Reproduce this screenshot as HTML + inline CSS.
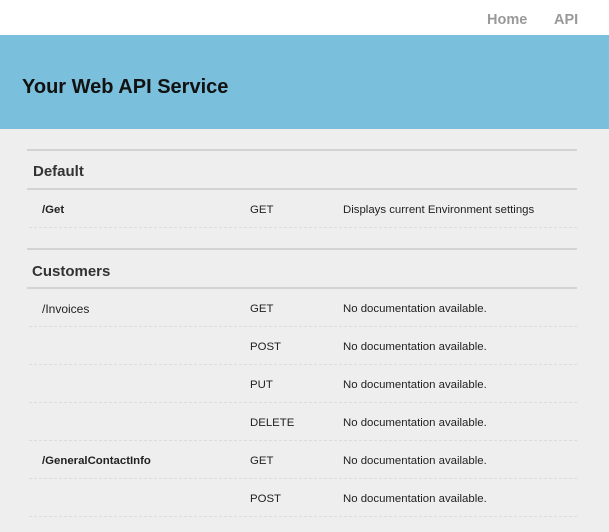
<!DOCTYPE html>
<html><head><meta charset="utf-8"><style>
*{margin:0;padding:0;box-sizing:border-box}
body{width:609px;height:532px;background:#eeeeee;font-family:"Liberation Sans",sans-serif;position:relative;overflow:hidden;color:#222}
.top{position:absolute;left:0;top:0;width:609px;height:35px;background:#fff}
.nav{position:absolute;top:12px;font-size:14.5px;font-weight:bold;color:#999}
.hero{position:absolute;left:0;top:35px;width:609px;height:94px;background:#7abfdb}
.hero h1{position:absolute;left:22px;top:41px;font-size:20px;font-weight:bold;color:#111}
.line{position:absolute;left:27px;width:550px;height:2px;background:#d3d3d3}
.dash{position:absolute;left:29px;width:548px;border-top:1px dashed #dcdcdc}
.h{position:absolute;font-size:15px;font-weight:bold;color:#333}
.t{position:absolute;font-size:11.4px;color:#222;white-space:nowrap}
</style></head><body>
<div class="top"></div>
<div class="nav" style="left:487px">Home</div>
<div class="nav" style="left:554px">API</div>
<div class="hero"><h1>Your Web API Service</h1></div>

<div class="line" style="top:149px"></div>
<div class="h" style="left:33px;top:163px">Default</div>
<div class="line" style="top:188px"></div>
<div class="t" style="left:42px;top:204px;font-weight:bold">/Get</div>
<div class="t" style="left:250px;top:204px">GET</div>
<div class="t" style="left:343px;top:204px">Displays current Environment settings</div>
<div class="dash" style="top:227px"></div>

<div class="line" style="top:248px"></div>
<div class="h" style="left:32px;top:263px">Customers</div>
<div class="line" style="top:287px"></div>

<div class="t" style="left:42px;top:302px;font-size:12px">/Invoices</div>
<div class="t" style="left:250px;top:303px">GET</div>
<div class="t" style="left:343px;top:303px">No documentation available.</div>
<div class="dash" style="top:326px"></div>
<div class="t" style="left:250px;top:341px">POST</div>
<div class="t" style="left:343px;top:341px">No documentation available.</div>
<div class="dash" style="top:364px"></div>
<div class="t" style="left:250px;top:379px">PUT</div>
<div class="t" style="left:343px;top:379px">No documentation available.</div>
<div class="dash" style="top:402px"></div>
<div class="t" style="left:250px;top:417px">DELETE</div>
<div class="t" style="left:343px;top:417px">No documentation available.</div>
<div class="dash" style="top:440px"></div>
<div class="t" style="left:42px;top:455px;font-weight:bold">/GeneralContactInfo</div>
<div class="t" style="left:250px;top:455px">GET</div>
<div class="t" style="left:343px;top:455px">No documentation available.</div>
<div class="dash" style="top:478px"></div>
<div class="t" style="left:250px;top:493px">POST</div>
<div class="t" style="left:343px;top:493px">No documentation available.</div>
<div class="dash" style="top:516px"></div>
</body></html>
